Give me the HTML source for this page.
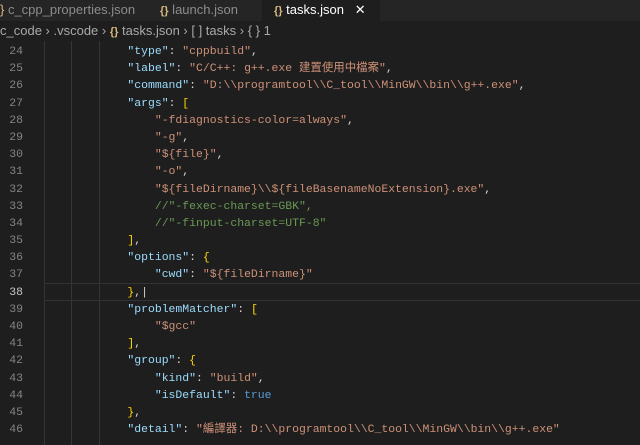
<!DOCTYPE html><html><head><style>
body{margin:0;width:640px;height:445px;overflow:hidden;background:#1e1e1e;font-family:"Liberation Sans","Noto Sans CJK TC",sans-serif;}
.tabs{position:absolute;top:0;left:0;width:640px;height:21px;background:#252526;}
.tab{position:absolute;top:0;height:21px;line-height:20px;font-size:13px;color:#8c8c8c;}
.br{position:absolute;top:21px;left:0;width:640px;height:20px;line-height:20px;font-size:13px;color:#a9a9a9;}
.y{color:#d7ba7d;font-weight:bold;font-size:11px}
.code{position:absolute;top:43px;left:0;font-family:"Liberation Mono","Noto Sans CJK TC",monospace;font-size:11.45px;}
.l{height:17.2px;line-height:17.2px;white-space:pre;position:relative}
.n{display:inline-block;width:23px;text-align:right;color:#858585;margin-right:22px}
.k{color:#9cdcfe}.s{color:#ce9178}.p{color:#d4d4d4}.b{color:#ffd700}.c{color:#6a9955}.t{color:#569cd6}.m{color:#ffd700}
.g{position:absolute;top:41px;width:1px;height:404px;background:#363636}
</style></head><body>
<div class="tabs">
<div class="tab" style="left:0;width:150px;"><span style="color:#d7ba7d">}</span> c_cpp_properties.json</div>
<div class="tab" style="left:150px;width:112px;padding-left:10px"><span class="y">{}</span> launch.json</div>
<div class="tab" style="left:262px;width:106px;background:#1e1e1e;color:#fff;padding-left:12px"><span class="y">{}</span> tasks.json &nbsp;&nbsp;✕</div>
</div>
<div class="br">c_code › .vscode › <span class="y">{}</span> tasks.json › [ ] tasks › { } 1</div>
<div class="g" style="left:44px"></div><div class="g" style="left:71px"></div><div class="g" style="left:99px"></div>
<div style="position:absolute;left:44px;top:283px;width:596px;height:16px;border:1px solid #333;border-left:none"></div>
<div class="code">
<div class="l"><span class="n">24</span>            <span class="k">"type"</span><span class="p">: </span><span class="s">"cppbuild"</span><span class="p">,</span></div>
<div class="l"><span class="n">25</span>            <span class="k">"label"</span><span class="p">: </span><span class="s">"C/C++: g++.exe 建置使用中檔案"</span><span class="p">,</span></div>
<div class="l"><span class="n">26</span>            <span class="k">"command"</span><span class="p">: </span><span class="s">"D:\\programtool\\C_tool\\MinGW\\bin\\g++.exe"</span><span class="p">,</span></div>
<div class="l"><span class="n">27</span>            <span class="k">"args"</span><span class="p">: </span><span class="b">[</span></div>
<div class="l"><span class="n">28</span>                <span class="s">"-fdiagnostics-color=always"</span><span class="p">,</span></div>
<div class="l"><span class="n">29</span>                <span class="s">"-g"</span><span class="p">,</span></div>
<div class="l"><span class="n">30</span>                <span class="s">"${file}"</span><span class="p">,</span></div>
<div class="l"><span class="n">31</span>                <span class="s">"-o"</span><span class="p">,</span></div>
<div class="l"><span class="n">32</span>                <span class="s">"${fileDirname}\\${fileBasenameNoExtension}.exe"</span><span class="p">,</span></div>
<div class="l"><span class="n">33</span>                <span class="c">//"-fexec-charset=GBK",</span></div>
<div class="l"><span class="n">34</span>                <span class="c">//"-finput-charset=UTF-8"</span></div>
<div class="l"><span class="n">35</span>            <span class="b">]</span><span class="p">,</span></div>
<div class="l"><span class="n">36</span>            <span class="k">"options"</span><span class="p">: </span><span class="m">{</span></div>
<div class="l"><span class="n">37</span>                <span class="k">"cwd"</span><span class="p">: </span><span class="s">"${fileDirname}"</span></div>
<div class="l"><span class="n" style="color:#c6c6c6">38</span>            <span class="m">}</span><span class="p">,|</span></div>
<div class="l"><span class="n">39</span>            <span class="k">"problemMatcher"</span><span class="p">: </span><span class="b">[</span></div>
<div class="l"><span class="n">40</span>                <span class="s">"$gcc"</span></div>
<div class="l"><span class="n">41</span>            <span class="b">]</span><span class="p">,</span></div>
<div class="l"><span class="n">42</span>            <span class="k">"group"</span><span class="p">: </span><span class="b">{</span></div>
<div class="l"><span class="n">43</span>                <span class="k">"kind"</span><span class="p">: </span><span class="s">"build"</span><span class="p">,</span></div>
<div class="l"><span class="n">44</span>                <span class="k">"isDefault"</span><span class="p">: </span><span class="t">true</span></div>
<div class="l"><span class="n">45</span>            <span class="b">}</span><span class="p">,</span></div>
<div class="l"><span class="n">46</span>            <span class="k">"detail"</span><span class="p">: </span><span class="s">"編譯器: D:\\programtool\\C_tool\\MinGW\\bin\\g++.exe"</span></div>
</div>
</body></html>
